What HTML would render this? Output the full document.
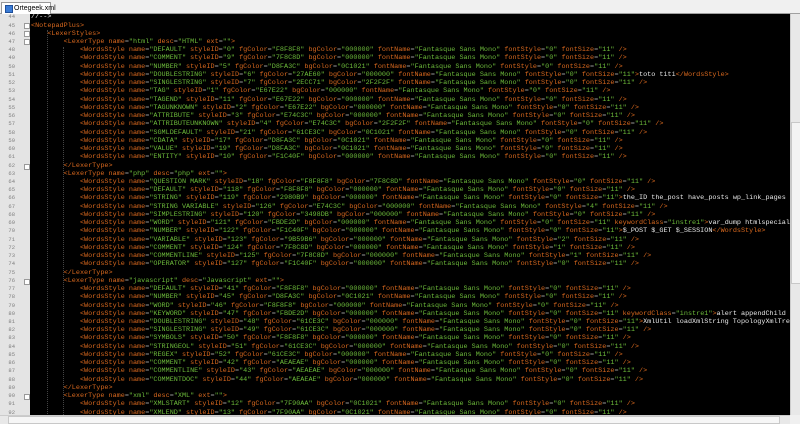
<!DOCTYPE html>
<html><head><meta charset="utf-8"><style>
*{margin:0;padding:0}
body{width:800px;height:423px;overflow:hidden;background:#f0f0f0;position:relative;font-family:"Liberation Mono",monospace}
#tabbar{position:absolute;left:0;top:0;width:800px;height:13px;background:#f0f0f0;border-bottom:1px solid #a0a0a0}
#tab{position:absolute;left:1px;top:2px;width:48px;height:11px;background:#fff;border:1px solid #999;border-bottom:none;font:7px "Liberation Sans",sans-serif;color:#000;line-height:11px}
#tab .ic{position:absolute;left:3px;top:2px;width:6px;height:6px;background:#3a7bd5;border:1px solid #1e4f9a}
#tab span{position:absolute;left:12px;top:0}
#gut{position:absolute;left:0;top:14px;width:30px;height:401px;background:#e4e4e4}
#nums{position:absolute;left:0;top:13.3px;width:15px;text-align:right;font-size:5.5px;line-height:8.24px;color:#808080;white-space:pre}
.fm{position:absolute;left:24px;width:4px;height:4px;background:#fff;border:1px solid #999}
#ed{position:absolute;left:30px;top:14px;width:760px;height:401px;background:#000;overflow:hidden}
.gd{position:absolute;top:0;width:0;border-left:1px dotted #444}
pre{position:absolute;left:1px;top:-0.7px;font-size:6.8px;line-height:8.24px;color:#d8681e;white-space:pre;font-family:"Liberation Mono",monospace}
b{font-weight:normal;color:#6cba3a}
i{font-style:normal;color:#999}
s{text-decoration:none;color:#e8e8e8}
#vs{position:absolute;left:790px;top:14px;width:10px;height:401px;background:#e8e8e8;border-left:1px solid #ccc}
#vt{position:absolute;left:791px;top:122px;width:8px;height:160px;background:#f4f4f4;border:1px solid #c8c8c8}
#hs{position:absolute;left:0;top:415px;width:790px;height:8px;background:#e8e8e8;border-top:1px solid #ccc}
#ht{position:absolute;left:8px;top:416px;width:770px;height:6px;background:#f6f6f6;border:1px solid #c8c8c8}
</style></head><body>
<div id="tabbar"><div id="tab"><div class="ic"></div><span>Ortegeek.xml</span></div></div>
<div id="gut"></div>
<div id="nums">44
45
46
47
48
49
50
51
52
53
54
55
56
57
58
59
60
61
62
63
64
65
66
67
68
69
70
71
72
73
74
75
76
77
78
79
80
81
82
83
84
85
86
87
88
89
90
91
92</div>
<div class="fm" style="top:22.5px"></div>
<div class="fm" style="top:30.7px"></div>
<div class="fm" style="top:39px"></div>
<div class="fm" style="top:163.5px"></div>
<div class="fm" style="top:278.9px"></div>
<div class="fm" style="top:394.2px"></div>
<div id="ed">
<div class="gd" style="left:17px;top:16px;height:390px"></div>
<div class="gd" style="left:33px;top:33px;height:370px"></div>
<pre><s>//--&gt;</s>
&lt;NotepadPlus&gt;
    &lt;LexerStyles&gt;
        &lt;LexerType name<i>=</i><b>"html"</b> desc<i>=</i><b>"HTML"</b> ext<i>=</i><b>""</b>&gt;
            &lt;WordsStyle name<i>=</i><b>"DEFAULT"</b> styleID<i>=</i><b>"0"</b> fgColor<i>=</i><b>"F8F8F8"</b> bgColor<i>=</i><b>"000000"</b> fontName<i>=</i><b>"Fantasque Sans Mono"</b> fontStyle<i>=</i><b>"0"</b> fontSize<i>=</i><b>"11"</b> /&gt;
            &lt;WordsStyle name<i>=</i><b>"COMMENT"</b> styleID<i>=</i><b>"9"</b> fgColor<i>=</i><b>"7F8C8D"</b> bgColor<i>=</i><b>"000000"</b> fontName<i>=</i><b>"Fantasque Sans Mono"</b> fontStyle<i>=</i><b>"0"</b> fontSize<i>=</i><b>"11"</b> /&gt;
            &lt;WordsStyle name<i>=</i><b>"NUMBER"</b> styleID<i>=</i><b>"5"</b> fgColor<i>=</i><b>"D8FA3C"</b> bgColor<i>=</i><b>"0C1021"</b> fontName<i>=</i><b>"Fantasque Sans Mono"</b> fontStyle<i>=</i><b>"0"</b> fontSize<i>=</i><b>"11"</b> /&gt;
            &lt;WordsStyle name<i>=</i><b>"DOUBLESTRING"</b> styleID<i>=</i><b>"6"</b> fgColor<i>=</i><b>"27AE60"</b> bgColor<i>=</i><b>"000000"</b> fontName<i>=</i><b>"Fantasque Sans Mono"</b> fontStyle<i>=</i><b>"0"</b> fontSize<i>=</i><b>"11"</b>&gt;<s>toto titi</s>&lt;/WordsStyle&gt;
            &lt;WordsStyle name<i>=</i><b>"SINGLESTRING"</b> styleID<i>=</i><b>"7"</b> fgColor<i>=</i><b>"2ECC71"</b> bgColor<i>=</i><b>"2F2F2F"</b> fontName<i>=</i><b>"Fantasque Sans Mono"</b> fontStyle<i>=</i><b>"0"</b> fontSize<i>=</i><b>"11"</b> /&gt;
            &lt;WordsStyle name<i>=</i><b>"TAG"</b> styleID<i>=</i><b>"1"</b> fgColor<i>=</i><b>"E67E22"</b> bgColor<i>=</i><b>"000000"</b> fontName<i>=</i><b>"Fantasque Sans Mono"</b> fontStyle<i>=</i><b>"0"</b> fontSize<i>=</i><b>"11"</b> /&gt;
            &lt;WordsStyle name<i>=</i><b>"TAGEND"</b> styleID<i>=</i><b>"11"</b> fgColor<i>=</i><b>"E67E22"</b> bgColor<i>=</i><b>"000000"</b> fontName<i>=</i><b>"Fantasque Sans Mono"</b> fontStyle<i>=</i><b>"0"</b> fontSize<i>=</i><b>"11"</b> /&gt;
            &lt;WordsStyle name<i>=</i><b>"TAGUNKNOWN"</b> styleID<i>=</i><b>"2"</b> fgColor<i>=</i><b>"E67E22"</b> bgColor<i>=</i><b>"000000"</b> fontName<i>=</i><b>"Fantasque Sans Mono"</b> fontStyle<i>=</i><b>"0"</b> fontSize<i>=</i><b>"11"</b> /&gt;
            &lt;WordsStyle name<i>=</i><b>"ATTRIBUTE"</b> styleID<i>=</i><b>"3"</b> fgColor<i>=</i><b>"E74C3C"</b> bgColor<i>=</i><b>"000000"</b> fontName<i>=</i><b>"Fantasque Sans Mono"</b> fontStyle<i>=</i><b>"0"</b> fontSize<i>=</i><b>"11"</b> /&gt;
            &lt;WordsStyle name<i>=</i><b>"ATTRIBUTEUNKNOWN"</b> styleID<i>=</i><b>"4"</b> fgColor<i>=</i><b>"E74C3C"</b> bgColor<i>=</i><b>"2F2F2F"</b> fontName<i>=</i><b>"Fantasque Sans Mono"</b> fontStyle<i>=</i><b>"0"</b> fontSize<i>=</i><b>"11"</b> /&gt;
            &lt;WordsStyle name<i>=</i><b>"SGMLDEFAULT"</b> styleID<i>=</i><b>"21"</b> fgColor<i>=</i><b>"61CE3C"</b> bgColor<i>=</i><b>"0C1021"</b> fontName<i>=</i><b>"Fantasque Sans Mono"</b> fontStyle<i>=</i><b>"0"</b> fontSize<i>=</i><b>"11"</b> /&gt;
            &lt;WordsStyle name<i>=</i><b>"CDATA"</b> styleID<i>=</i><b>"17"</b> fgColor<i>=</i><b>"D8FA3C"</b> bgColor<i>=</i><b>"0C1021"</b> fontName<i>=</i><b>"Fantasque Sans Mono"</b> fontStyle<i>=</i><b>"0"</b> fontSize<i>=</i><b>"11"</b> /&gt;
            &lt;WordsStyle name<i>=</i><b>"VALUE"</b> styleID<i>=</i><b>"19"</b> fgColor<i>=</i><b>"D8FA3C"</b> bgColor<i>=</i><b>"0C1021"</b> fontName<i>=</i><b>"Fantasque Sans Mono"</b> fontStyle<i>=</i><b>"0"</b> fontSize<i>=</i><b>"11"</b> /&gt;
            &lt;WordsStyle name<i>=</i><b>"ENTITY"</b> styleID<i>=</i><b>"10"</b> fgColor<i>=</i><b>"F1C40F"</b> bgColor<i>=</i><b>"000000"</b> fontName<i>=</i><b>"Fantasque Sans Mono"</b> fontStyle<i>=</i><b>"0"</b> fontSize<i>=</i><b>"11"</b> /&gt;
        &lt;/LexerType&gt;
        &lt;LexerType name<i>=</i><b>"php"</b> desc<i>=</i><b>"php"</b> ext<i>=</i><b>""</b>&gt;
            &lt;WordsStyle name<i>=</i><b>"QUESTION MARK"</b> styleID<i>=</i><b>"18"</b> fgColor<i>=</i><b>"F8F8F8"</b> bgColor<i>=</i><b>"7F8C8D"</b> fontName<i>=</i><b>"Fantasque Sans Mono"</b> fontStyle<i>=</i><b>"0"</b> fontSize<i>=</i><b>"11"</b> /&gt;
            &lt;WordsStyle name<i>=</i><b>"DEFAULT"</b> styleID<i>=</i><b>"118"</b> fgColor<i>=</i><b>"F8F8F8"</b> bgColor<i>=</i><b>"000000"</b> fontName<i>=</i><b>"Fantasque Sans Mono"</b> fontStyle<i>=</i><b>"0"</b> fontSize<i>=</i><b>"11"</b> /&gt;
            &lt;WordsStyle name<i>=</i><b>"STRING"</b> styleID<i>=</i><b>"119"</b> fgColor<i>=</i><b>"2980B9"</b> bgColor<i>=</i><b>"000000"</b> fontName<i>=</i><b>"Fantasque Sans Mono"</b> fontStyle<i>=</i><b>"0"</b> fontSize<i>=</i><b>"11"</b>&gt;<s>the_ID the_post have_posts wp_link_pages</s>
            &lt;WordsStyle name<i>=</i><b>"STRING VARIABLE"</b> styleID<i>=</i><b>"126"</b> fgColor<i>=</i><b>"E74C3C"</b> bgColor<i>=</i><b>"000000"</b> fontName<i>=</i><b>"Fantasque Sans Mono"</b> fontStyle<i>=</i><b>"4"</b> fontSize<i>=</i><b>"11"</b> /&gt;
            &lt;WordsStyle name<i>=</i><b>"SIMPLESTRING"</b> styleID<i>=</i><b>"120"</b> fgColor<i>=</i><b>"3498DB"</b> bgColor<i>=</i><b>"000000"</b> fontName<i>=</i><b>"Fantasque Sans Mono"</b> fontStyle<i>=</i><b>"0"</b> fontSize<i>=</i><b>"11"</b> /&gt;
            &lt;WordsStyle name<i>=</i><b>"WORD"</b> styleID<i>=</i><b>"121"</b> fgColor<i>=</i><b>"FBDE2D"</b> bgColor<i>=</i><b>"000000"</b> fontName<i>=</i><b>"Fantasque Sans Mono"</b> fontStyle<i>=</i><b>"0"</b> fontSize<i>=</i><b>"11"</b> keywordClass<i>=</i><b>"instre1"</b>&gt;<s>var_dump htmlspecialchars</s>
            &lt;WordsStyle name<i>=</i><b>"NUMBER"</b> styleID<i>=</i><b>"122"</b> fgColor<i>=</i><b>"F1C40F"</b> bgColor<i>=</i><b>"000000"</b> fontName<i>=</i><b>"Fantasque Sans Mono"</b> fontStyle<i>=</i><b>"0"</b> fontSize<i>=</i><b>"11"</b>&gt;<s>$_POST $_GET $_SESSION</s>&lt;/WordsStyle&gt;
            &lt;WordsStyle name<i>=</i><b>"VARIABLE"</b> styleID<i>=</i><b>"123"</b> fgColor<i>=</i><b>"9B59B6"</b> bgColor<i>=</i><b>"000000"</b> fontName<i>=</i><b>"Fantasque Sans Mono"</b> fontStyle<i>=</i><b>"2"</b> fontSize<i>=</i><b>"11"</b> /&gt;
            &lt;WordsStyle name<i>=</i><b>"COMMENT"</b> styleID<i>=</i><b>"124"</b> fgColor<i>=</i><b>"7F8C8D"</b> bgColor<i>=</i><b>"000000"</b> fontName<i>=</i><b>"Fantasque Sans Mono"</b> fontStyle<i>=</i><b>"1"</b> fontSize<i>=</i><b>"11"</b> /&gt;
            &lt;WordsStyle name<i>=</i><b>"COMMENTLINE"</b> styleID<i>=</i><b>"125"</b> fgColor<i>=</i><b>"7F8C8D"</b> bgColor<i>=</i><b>"000000"</b> fontName<i>=</i><b>"Fantasque Sans Mono"</b> fontStyle<i>=</i><b>"1"</b> fontSize<i>=</i><b>"11"</b> /&gt;
            &lt;WordsStyle name<i>=</i><b>"OPERATOR"</b> styleID<i>=</i><b>"127"</b> fgColor<i>=</i><b>"F1C40F"</b> bgColor<i>=</i><b>"000000"</b> fontName<i>=</i><b>"Fantasque Sans Mono"</b> fontStyle<i>=</i><b>"0"</b> fontSize<i>=</i><b>"11"</b> /&gt;
        &lt;/LexerType&gt;
        &lt;LexerType name<i>=</i><b>"javascript"</b> desc<i>=</i><b>"Javascript"</b> ext<i>=</i><b>""</b>&gt;
            &lt;WordsStyle name<i>=</i><b>"DEFAULT"</b> styleID<i>=</i><b>"41"</b> fgColor<i>=</i><b>"F8F8F8"</b> bgColor<i>=</i><b>"000000"</b> fontName<i>=</i><b>"Fantasque Sans Mono"</b> fontStyle<i>=</i><b>"0"</b> fontSize<i>=</i><b>"11"</b> /&gt;
            &lt;WordsStyle name<i>=</i><b>"NUMBER"</b> styleID<i>=</i><b>"45"</b> fgColor<i>=</i><b>"D8FA3C"</b> bgColor<i>=</i><b>"0C1021"</b> fontName<i>=</i><b>"Fantasque Sans Mono"</b> fontStyle<i>=</i><b>"0"</b> fontSize<i>=</i><b>"11"</b> /&gt;
            &lt;WordsStyle name<i>=</i><b>"WORD"</b> styleID<i>=</i><b>"46"</b> fgColor<i>=</i><b>"F8F8F8"</b> bgColor<i>=</i><b>"000000"</b> fontName<i>=</i><b>"Fantasque Sans Mono"</b> fontStyle<i>=</i><b>"0"</b> fontSize<i>=</i><b>"11"</b> /&gt;
            &lt;WordsStyle name<i>=</i><b>"KEYWORD"</b> styleID<i>=</i><b>"47"</b> fgColor<i>=</i><b>"FBDE2D"</b> bgColor<i>=</i><b>"000000"</b> fontName<i>=</i><b>"Fantasque Sans Mono"</b> fontStyle<i>=</i><b>"0"</b> fontSize<i>=</i><b>"11"</b> keywordClass<i>=</i><b>"instre1"</b>&gt;<s>alert appendChild</s>
            &lt;WordsStyle name<i>=</i><b>"DOUBLESTRING"</b> styleID<i>=</i><b>"48"</b> fgColor<i>=</i><b>"61CE3C"</b> bgColor<i>=</i><b>"000000"</b> fontName<i>=</i><b>"Fantasque Sans Mono"</b> fontStyle<i>=</i><b>"0"</b> fontSize<i>=</i><b>"11"</b>&gt;<s>XmlUtil loadXmlString TopologyXmlTree</s>
            &lt;WordsStyle name<i>=</i><b>"SINGLESTRING"</b> styleID<i>=</i><b>"49"</b> fgColor<i>=</i><b>"61CE3C"</b> bgColor<i>=</i><b>"000000"</b> fontName<i>=</i><b>"Fantasque Sans Mono"</b> fontStyle<i>=</i><b>"0"</b> fontSize<i>=</i><b>"11"</b> /&gt;
            &lt;WordsStyle name<i>=</i><b>"SYMBOLS"</b> styleID<i>=</i><b>"50"</b> fgColor<i>=</i><b>"F8F8F8"</b> bgColor<i>=</i><b>"000000"</b> fontName<i>=</i><b>"Fantasque Sans Mono"</b> fontStyle<i>=</i><b>"0"</b> fontSize<i>=</i><b>"11"</b> /&gt;
            &lt;WordsStyle name<i>=</i><b>"STRINGEOL"</b> styleID<i>=</i><b>"51"</b> fgColor<i>=</i><b>"61CE3C"</b> bgColor<i>=</i><b>"000000"</b> fontName<i>=</i><b>"Fantasque Sans Mono"</b> fontStyle<i>=</i><b>"0"</b> fontSize<i>=</i><b>"11"</b> /&gt;
            &lt;WordsStyle name<i>=</i><b>"REGEX"</b> styleID<i>=</i><b>"52"</b> fgColor<i>=</i><b>"61CE3C"</b> bgColor<i>=</i><b>"000000"</b> fontName<i>=</i><b>"Fantasque Sans Mono"</b> fontStyle<i>=</i><b>"0"</b> fontSize<i>=</i><b>"11"</b> /&gt;
            &lt;WordsStyle name<i>=</i><b>"COMMENT"</b> styleID<i>=</i><b>"42"</b> fgColor<i>=</i><b>"AEAEAE"</b> bgColor<i>=</i><b>"000000"</b> fontName<i>=</i><b>"Fantasque Sans Mono"</b> fontStyle<i>=</i><b>"0"</b> fontSize<i>=</i><b>"11"</b> /&gt;
            &lt;WordsStyle name<i>=</i><b>"COMMENTLINE"</b> styleID<i>=</i><b>"43"</b> fgColor<i>=</i><b>"AEAEAE"</b> bgColor<i>=</i><b>"000000"</b> fontName<i>=</i><b>"Fantasque Sans Mono"</b> fontStyle<i>=</i><b>"0"</b> fontSize<i>=</i><b>"11"</b> /&gt;
            &lt;WordsStyle name<i>=</i><b>"COMMENTDOC"</b> styleID<i>=</i><b>"44"</b> fgColor<i>=</i><b>"AEAEAE"</b> bgColor<i>=</i><b>"000000"</b> fontName<i>=</i><b>"Fantasque Sans Mono"</b> fontStyle<i>=</i><b>"0"</b> fontSize<i>=</i><b>"11"</b> /&gt;
        &lt;/LexerType&gt;
        &lt;LexerType name<i>=</i><b>"xml"</b> desc<i>=</i><b>"XML"</b> ext<i>=</i><b>""</b>&gt;
            &lt;WordsStyle name<i>=</i><b>"XMLSTART"</b> styleID<i>=</i><b>"12"</b> fgColor<i>=</i><b>"7F90AA"</b> bgColor<i>=</i><b>"0C1021"</b> fontName<i>=</i><b>"Fantasque Sans Mono"</b> fontStyle<i>=</i><b>"0"</b> fontSize<i>=</i><b>"11"</b> /&gt;
            &lt;WordsStyle name<i>=</i><b>"XMLEND"</b> styleID<i>=</i><b>"13"</b> fgColor<i>=</i><b>"7F90AA"</b> bgColor<i>=</i><b>"0C1021"</b> fontName<i>=</i><b>"Fantasque Sans Mono"</b> fontStyle<i>=</i><b>"0"</b> fontSize<i>=</i><b>"11"</b> /&gt;</pre>
</div>
<div id="vs"></div><div id="vt"></div>
<div id="hs"></div><div id="ht"></div>
</body></html>
